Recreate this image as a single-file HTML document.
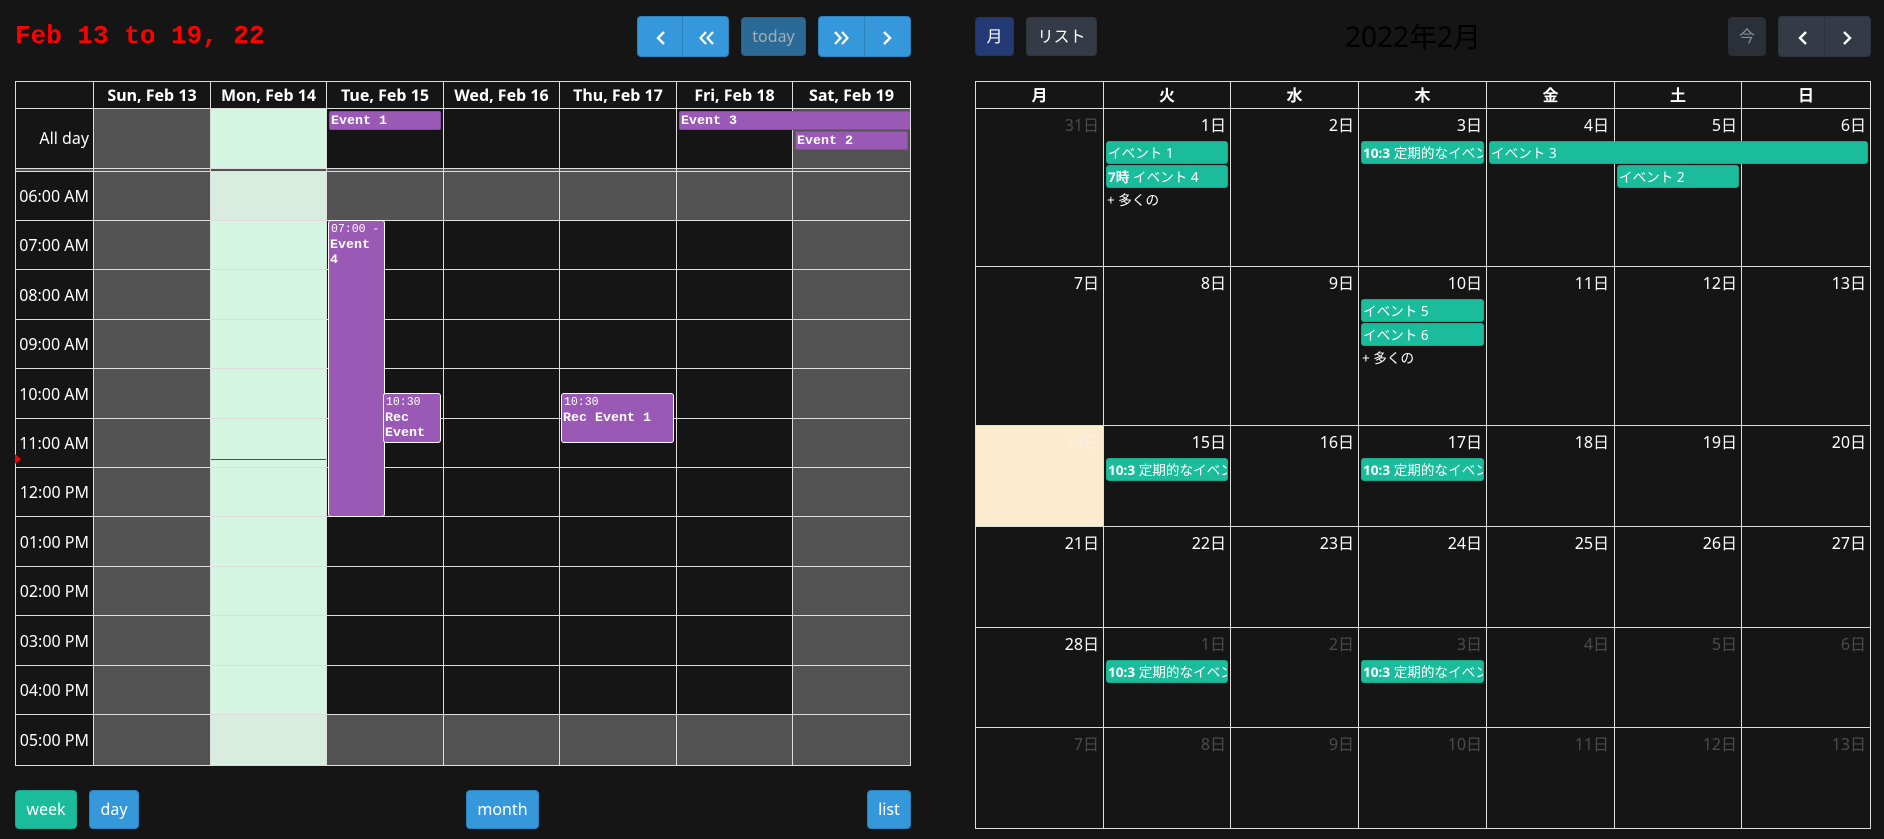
<!DOCTYPE html>
<html lang="ja"><head><meta charset="utf-8"><title>Calendar</title>
<style>
html,body{margin:0;padding:0;background:#151515}
body{position:relative;width:1884px;height:839px;overflow:hidden;font-family:"Noto Sans","Open Sans","WenQuanYi Zen Hei","Noto Sans CJK JP",sans-serif;color:#fff;font-size:14px}
div,span{position:absolute;box-sizing:border-box}
.h{height:1px;background:#ddd}
.v{width:1px;background:#ddd}
.g{background:#525252}.m{background:#d5f5e3}.n{background:#d8ede0}
.b{background:#3498db;border:1px solid #2c81ba;border-radius:4px;color:#fff;text-align:center;font-size:16px}
.d{width:1px;background:#2c81ba;top:0;bottom:0}
.hd{top:82px;height:26px;line-height:26px;text-align:center;font-weight:700;font-size:16px;white-space:nowrap}
.t{left:16px;width:76px;text-align:right;padding-right:3px;font-size:16px;height:22px;line-height:22px;white-space:nowrap}
.e{background:#9b59b6;border:1px solid #8e44ad;border-radius:2px;font-family:"Liberation Mono",monospace;font-weight:700;font-size:13.33px;line-height:19px;height:19px;color:#fff;padding-left:1px;white-space:nowrap;overflow:hidden}
.te{background:#9b59b6;border:1px solid #fff;border-radius:3px;font-family:"Liberation Mono",monospace;font-size:13.33px;line-height:15px;color:#fff;padding:1px 1px;overflow:hidden;font-weight:700}
.te i{font-style:normal;letter-spacing:0;font-size:11.5px;display:block;line-height:15px;font-weight:400;white-space:nowrap;padding-left:1px;margin-bottom:1px}
.te b{display:block}
.mh{top:82px;height:26px;line-height:26px;text-align:center;font-weight:700;font-size:16px}
.n1{height:22px;line-height:22px;font-size:16px;text-align:right;white-space:nowrap;width:100px;transform:translateX(1px)}
.o{color:#4b4b4b}
.me{background:#1abc9c;border:1px solid #18a98c;border-radius:3px;height:23px;line-height:22px;font-size:13.6px;color:#fff;padding-left:1px;white-space:nowrap;overflow:hidden}
.me b{font-weight:700}
.more{font-size:13.6px;line-height:18px;white-space:nowrap;color:#fff}
svg{position:absolute;overflow:visible}
</style></head><body>

<!-- Left toolbar -->
<div style="left:15px;top:21px;font-family:'Liberation Mono',monospace;font-weight:700;font-size:26px;line-height:30px;color:#f00;white-space:nowrap">Feb 13 to 19, 22</div>

<div class="b" style="left:637px;top:16px;width:92px;height:41px"><div class="d" style="left:44px"></div>
<svg style="left:18px;top:14px" width="10" height="14"><path d="M8 1 L2 7 L8 13" fill="none" stroke="#fff" stroke-width="2.4"/></svg>
<svg style="left:61px;top:14px" width="16" height="14"><path d="M7 1 L1.500 7 L7 13 M14 1 L8.500 7 L14 13" fill="none" stroke="#fff" stroke-width="2.2"/></svg>
</div>
<div class="b" style="left:741px;top:17px;width:65px;height:39px;background:#2b6a96;border-color:#285f87;color:#a4adb3;line-height:36px">today</div>
<div class="b" style="left:818px;top:16px;width:93px;height:41px"><div class="d" style="left:45px"></div>
<svg style="left:14px;top:14px" width="16" height="14"><path d="M2 1 L7.500 7 L2 13 M9 1 L14.500 7 L9 13" fill="none" stroke="#fff" stroke-width="2.2"/></svg>
<svg style="left:63px;top:14px" width="10" height="14"><path d="M2 1 L8 7 L2 13" fill="none" stroke="#fff" stroke-width="2.4"/></svg>
</div>

<!-- Left backgrounds -->
<div class="g" style="left:94px;top:109px;width:116px;height:656px"></div>
<div class="m" style="left:211px;top:109px;width:115px;height:656px"></div>
<div class="g" style="left:793px;top:109px;width:117px;height:656px"></div>
<div class="g" style="left:94px;top:169px;width:816px;height:2px"></div>
<div class="g" style="left:16px;top:169px;width:78px;height:2px"></div>
<div class="g" style="left:94px;top:172px;width:816px;height:48px"></div>
<div class="g" style="left:94px;top:715px;width:816px;height:50px"></div>
<div class="n" style="left:211px;top:172px;width:115px;height:48px"></div>
<div class="n" style="left:211px;top:715px;width:115px;height:50px"></div>

<!-- Left lines -->
<div class="h" style="left:15px;top:81px;width:896px"></div>
<div class="h" style="left:15px;top:108px;width:896px"></div>
<div class="h" style="left:15px;top:168px;width:896px"></div>
<div class="h" style="left:15px;top:171px;width:896px"></div>
<div class="h" style="left:15px;top:220px;width:896px"></div>
<div class="h" style="left:15px;top:269px;width:896px"></div>
<div class="h" style="left:15px;top:319px;width:896px"></div>
<div class="h" style="left:15px;top:368px;width:896px"></div>
<div class="h" style="left:15px;top:418px;width:896px"></div>
<div class="h" style="left:15px;top:467px;width:896px"></div>
<div class="h" style="left:15px;top:516px;width:896px"></div>
<div class="h" style="left:15px;top:566px;width:896px"></div>
<div class="h" style="left:15px;top:615px;width:896px"></div>
<div class="h" style="left:15px;top:665px;width:896px"></div>
<div class="h" style="left:15px;top:714px;width:896px"></div>
<div class="h" style="left:15px;top:765px;width:896px"></div>
<div class="v" style="left:15px;top:81px;height:685px"></div>
<div class="v" style="left:93px;top:81px;height:685px"></div>
<div class="v" style="left:210px;top:81px;height:685px"></div>
<div class="v" style="left:326px;top:81px;height:685px"></div>
<div class="v" style="left:443px;top:81px;height:685px"></div>
<div class="v" style="left:559px;top:81px;height:685px"></div>
<div class="v" style="left:676px;top:81px;height:685px"></div>
<div class="v" style="left:792px;top:81px;height:685px"></div>
<div class="v" style="left:910px;top:81px;height:685px"></div>

<!-- Left headers -->
<div class="hd" style="left:94px;width:116px">Sun, Feb 13</div>
<div class="hd" style="left:211px;width:115px">Mon, Feb 14</div>
<div class="hd" style="left:327px;width:116px">Tue, Feb 15</div>
<div class="hd" style="left:444px;width:115px">Wed, Feb 16</div>
<div class="hd" style="left:560px;width:116px">Thu, Feb 17</div>
<div class="hd" style="left:677px;width:115px">Fri, Feb 18</div>
<div class="hd" style="left:793px;width:117px">Sat, Feb 19</div>

<!-- Times -->
<div class="t" style="top:127px">All day</div>
<div class="t" style="top:185px">06:00 AM</div>
<div class="t" style="top:234px">07:00 AM</div>
<div class="t" style="top:284px">08:00 AM</div>
<div class="t" style="top:333px">09:00 AM</div>
<div class="t" style="top:383px">10:00 AM</div>
<div class="t" style="top:432px">11:00 AM</div>
<div class="t" style="top:481px">12:00 PM</div>
<div class="t" style="top:531px">01:00 PM</div>
<div class="t" style="top:580px">02:00 PM</div>
<div class="t" style="top:630px">03:00 PM</div>
<div class="t" style="top:679px">04:00 PM</div>
<div class="t" style="top:729px">05:00 PM</div>

<!-- Left events -->
<div class="e" style="left:329px;top:111px;width:112px">Event 1</div>
<div class="e" style="left:679px;top:111px;width:231px;border-radius:2px 0 0 2px;border-right:0">Event 3</div>
<div class="e" style="left:795px;top:131px;width:113px">Event 2</div>
<div class="te" style="left:328px;top:220px;width:57px;height:297px"><i>07:00 -</i><b>Event<br>4</b></div>
<div class="te" style="left:383px;top:393px;width:58px;height:50px"><i>10:30</i>Rec<br>Event</div>
<div class="te" style="left:561px;top:393px;width:113px;height:50px"><i>10:30</i>Rec Event 1</div>

<!-- Now indicator -->
<div style="left:211px;top:459px;width:115px;height:1px;background:#d9120a"></div>
<svg style="left:15px;top:454px" width="7" height="10"><path d="M0 0 L6 5 L0 10 Z" fill="#f00"/></svg>

<!-- Bottom buttons -->
<div class="b" style="left:15px;top:790px;width:62px;height:39px;background:#1abc9c;border-color:#18a98c;line-height:36px">week</div>
<div class="b" style="left:89px;top:790px;width:50px;height:39px;line-height:36px">day</div>
<div class="b" style="left:466px;top:790px;width:73px;height:39px;line-height:36px">month</div>
<div class="b" style="left:867px;top:790px;width:44px;height:39px;line-height:36px">list</div>

<!-- Right toolbar -->
<div class="b" style="left:975px;top:17px;width:39px;height:39px;background:#233a74;border-color:#21346a;line-height:36px">月</div>
<div class="b" style="left:1026px;top:17px;width:71px;height:39px;background:#343a46;border-color:#2f3540;line-height:36px">リスト</div>
<div style="left:1270px;top:15px;width:286px;text-align:center;font-size:28px;line-height:44px;color:#000;white-space:nowrap">2022年2月</div>
<div class="b" style="left:1728px;top:17px;width:38px;height:39px;background:#2b2f38;border-color:#292d35;color:#8a8d92;line-height:36px">今</div>
<div class="b" style="left:1778px;top:16px;width:93px;height:41px;background:#343a46;border-color:#2f3540"><div class="d" style="left:45px;background:#2d323d"></div>
<svg style="left:19px;top:14px" width="10" height="14"><path d="M8 1 L2 7 L8 13" fill="none" stroke="#fff" stroke-width="2.4"/></svg>
<svg style="left:63px;top:14px" width="10" height="14"><path d="M2 1 L8 7 L2 13" fill="none" stroke="#fff" stroke-width="2.4"/></svg>
</div>

<!-- Right backgrounds + lines -->
<div style="left:976px;top:426px;width:127px;height:100px;background:#fdebd0"></div>
<div class="h" style="left:975px;top:81px;width:896px"></div>
<div class="h" style="left:975px;top:108px;width:896px"></div>
<div class="h" style="left:975px;top:266px;width:896px"></div>
<div class="h" style="left:975px;top:425px;width:896px"></div>
<div class="h" style="left:975px;top:526px;width:896px"></div>
<div class="h" style="left:975px;top:627px;width:896px"></div>
<div class="h" style="left:975px;top:727px;width:896px"></div>
<div class="h" style="left:975px;top:828px;width:896px"></div>
<div class="v" style="left:975px;top:81px;height:748px"></div>
<div class="v" style="left:1103px;top:81px;height:748px"></div>
<div class="v" style="left:1230px;top:81px;height:748px"></div>
<div class="v" style="left:1358px;top:81px;height:748px"></div>
<div class="v" style="left:1486px;top:81px;height:748px"></div>
<div class="v" style="left:1614px;top:81px;height:748px"></div>
<div class="v" style="left:1741px;top:81px;height:748px"></div>
<div class="v" style="left:1870px;top:81px;height:748px"></div>

<!-- Right headers -->
<div class="mh" style="left:976px;width:127px">月</div>
<div class="mh" style="left:1104px;width:126px">火</div>
<div class="mh" style="left:1231px;width:127px">水</div>
<div class="mh" style="left:1359px;width:127px">木</div>
<div class="mh" style="left:1487px;width:127px">金</div>
<div class="mh" style="left:1615px;width:126px">土</div>
<div class="mh" style="left:1742px;width:128px">日</div>

<!-- Day numbers -->
<div class="n1 o" style="left:998px;top:114px">31日</div>
<div class="n1" style="left:1125px;top:114px">1日</div>
<div class="n1" style="left:1253px;top:114px">2日</div>
<div class="n1" style="left:1381px;top:114px">3日</div>
<div class="n1" style="left:1508px;top:114px">4日</div>
<div class="n1" style="left:1636px;top:114px">5日</div>
<div class="n1" style="left:1765px;top:114px">6日</div>

<div class="n1" style="left:998px;top:272px">7日</div>
<div class="n1" style="left:1125px;top:272px">8日</div>
<div class="n1" style="left:1253px;top:272px">9日</div>
<div class="n1" style="left:1381px;top:272px">10日</div>
<div class="n1" style="left:1508px;top:272px">11日</div>
<div class="n1" style="left:1636px;top:272px">12日</div>
<div class="n1" style="left:1765px;top:272px">13日</div>

<div class="n1" style="left:998px;top:431px;color:#f8f0e4">14日</div>
<div class="n1" style="left:1125px;top:431px">15日</div>
<div class="n1" style="left:1253px;top:431px">16日</div>
<div class="n1" style="left:1381px;top:431px">17日</div>
<div class="n1" style="left:1508px;top:431px">18日</div>
<div class="n1" style="left:1636px;top:431px">19日</div>
<div class="n1" style="left:1765px;top:431px">20日</div>

<div class="n1" style="left:998px;top:532px">21日</div>
<div class="n1" style="left:1125px;top:532px">22日</div>
<div class="n1" style="left:1253px;top:532px">23日</div>
<div class="n1" style="left:1381px;top:532px">24日</div>
<div class="n1" style="left:1508px;top:532px">25日</div>
<div class="n1" style="left:1636px;top:532px">26日</div>
<div class="n1" style="left:1765px;top:532px">27日</div>

<div class="n1" style="left:998px;top:633px">28日</div>
<div class="n1 o" style="left:1125px;top:633px">1日</div>
<div class="n1 o" style="left:1253px;top:633px">2日</div>
<div class="n1 o" style="left:1381px;top:633px">3日</div>
<div class="n1 o" style="left:1508px;top:633px">4日</div>
<div class="n1 o" style="left:1636px;top:633px">5日</div>
<div class="n1 o" style="left:1765px;top:633px">6日</div>

<div class="n1 o" style="left:998px;top:733px">7日</div>
<div class="n1 o" style="left:1125px;top:733px">8日</div>
<div class="n1 o" style="left:1253px;top:733px">9日</div>
<div class="n1 o" style="left:1381px;top:733px">10日</div>
<div class="n1 o" style="left:1508px;top:733px">11日</div>
<div class="n1 o" style="left:1636px;top:733px">12日</div>
<div class="n1 o" style="left:1765px;top:733px">13日</div>

<!-- Month events -->
<div class="me" style="left:1106px;top:141px;width:122px">イベント 1</div>
<div class="me" style="left:1106px;top:165px;width:122px"><b>7時</b> イベント 4</div>
<div class="more" style="left:1107px;top:191px">+ 多くの</div>
<div class="me" style="left:1361px;top:141px;width:123px"><b>10:3</b> 定期的なイベント</div>
<div class="me" style="left:1489px;top:141px;width:379px">イベント 3</div>
<div class="me" style="left:1617px;top:165px;width:122px">イベント 2</div>

<div class="me" style="left:1361px;top:299px;width:123px">イベント 5</div>
<div class="me" style="left:1361px;top:323px;width:123px">イベント 6</div>
<div class="more" style="left:1362px;top:349px">+ 多くの</div>

<div class="me" style="left:1106px;top:458px;width:122px"><b>10:3</b> 定期的なイベント</div>
<div class="me" style="left:1361px;top:458px;width:123px"><b>10:3</b> 定期的なイベント</div>
<div class="me" style="left:1106px;top:660px;width:122px"><b>10:3</b> 定期的なイベント</div>
<div class="me" style="left:1361px;top:660px;width:123px"><b>10:3</b> 定期的なイベント</div>

</body></html>
